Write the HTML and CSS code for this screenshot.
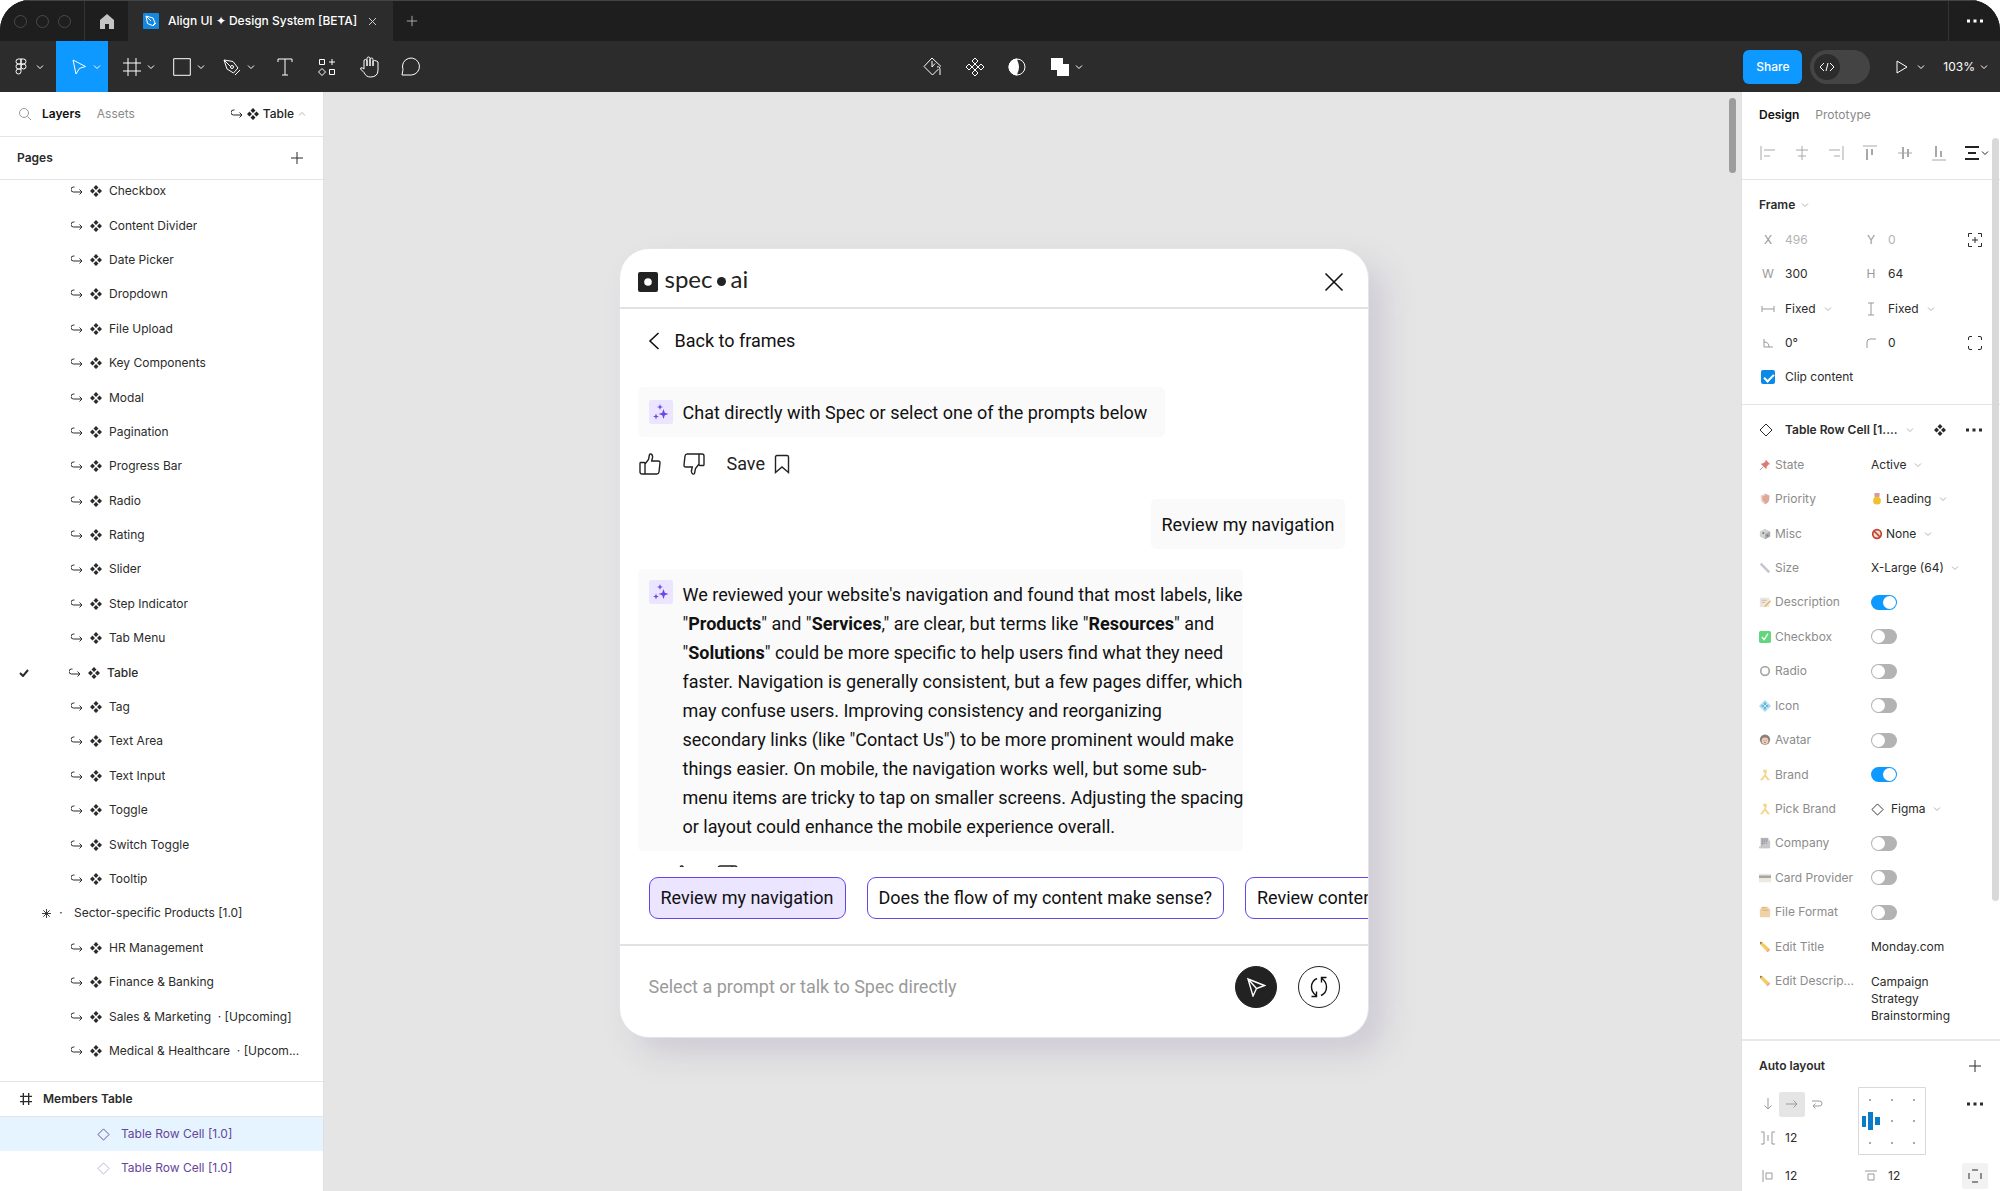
FILE: index.html
```
<!DOCTYPE html>
<html lang="en">
<head>
  <meta charset="UTF-8">
  <title>Align UI Design System</title>
  <link rel="stylesheet" href="styles.css">
</head>
<body>
  <!-- icon sprite -->
  <svg class="sprite" aria-hidden="true">
    <symbol id="chevron" viewBox="0 0 8 8"><path d="M1 2.5l3 3 3-3"/></symbol>
    <symbol id="chevron-up" viewBox="0 0 8 8"><path d="M1 5.5l3-3 3 3"/></symbol>
    <symbol id="plus" viewBox="0 0 14 14"><path d="M7 1v12M1 7h12"/></symbol>
    <symbol id="more" viewBox="0 0 18 6"><path d="M1 1.500h3v3H1zM7.500 1.500h3v3h-3zM14 1.500h3v3h-3z" fill="currentColor" stroke="none"/></symbol>
    <symbol id="arrow" viewBox="0 0 12 10"><path d="M3.500 1H2.500a1.500 1.500 0 0 0 0 5H11M8.500 3.500L11 6 8.500 8.500"/></symbol>
    <symbol id="comp" viewBox="0 0 12 12"><path d="M6 0l2.500 2.500L6 5 3.500 2.500zM6 7l2.500 2.500L6 12 3.500 9.500zM2.500 3.500L5 6 2.500 8.500 0 6zM9.500 3.500L12 6 9.500 8.500 7 6z" fill="currentColor" stroke="none"/></symbol>
    <symbol id="diamond" viewBox="0 0 14 14"><path d="M7 1l6 6-6 6-6-6z"/></symbol>
    <symbol id="frame" viewBox="0 0 18 18"><path d="M5 0v18M13 0v18M0 5h18M0 13h18"/></symbol>
    <symbol id="sparkle" viewBox="0 0 24 24"><path d="M14.500 9l1.300 3.700L19.500 14l-3.700 1.300-1.300 3.700-1.300-3.700L9.500 14l3.700-1.300zM11 4l.8 2.200L14 7l-2.200.8L11 10l-.8-2.200L8 7l2.200-.8zM7 13.500l.8 2.200 2.200.8-2.200.8L7 19.500l-.8-2.200-2.200-.8 2.200-.8z" fill="currentColor" stroke="none"/></symbol>
    <symbol id="thumb-up" viewBox="0 0 22 22"><path d="M1.500 9.500h3.500a1 1 0 0 1 1 1V21H3a2 2 0 0 1-2-2v-8.500q0-1 .5-1zM6 11l3.500-4.500 1-5Q11 .6 12 1q2 1 1.500 3.500L12.700 8h6.500q2 0 1.800 2l-1 9q-.3 2-2.300 2H6"/></symbol>
    <symbol id="thumb-down" viewBox="0 0 22 22"><path d="M20.500 12.500H17a1 1 0 0 1-1-1V1h3a2 2 0 0 1 2 2v8.500q0 1-.5 1zM16 11l-3.500 4.500-1 5q-.5.900-1.500.5-2-1-1.500-3.500L9.300 14H2.800Q.8 14 1 12l1-9q.3-2 2.300-2H16"/></symbol>
    <symbol id="pencil" viewBox="0 0 14 14"><path d="M1 1l3 .5L13 10l-3 3L1.500 4z" fill="#f3cd62"/><path d="M13 10l-3 3-1-1 3-3z" fill="#e8a0a0"/><path d="M1 1l3 .5L1.500 4z" fill="#8d7a60"/></symbol>
    <symbol id="ribbon" viewBox="0 0 14 14"><path d="M5 1h4v3L8 7l5 6h-3L7 9l-3 4H1l5-6 1-2.500L5 4z" fill="#f3d583"/></symbol>
    <symbol id="ic-pin" viewBox="0 0 14 14"><path d="M8 1l5 5-2 .5L9 9l-.5 3L2 5.500 5 5l2.500-2z" fill="#dd7a72"/><path d="M5 9l-4 4" stroke="#999"/></symbol>
    <symbol id="ic-shield" viewBox="0 0 14 14"><path d="M7 1l5 2v4q0 4-5 6-5-2-5-6V3z" fill="#e8d6cc"/><path d="M7 1v12q5-2 5-6V3z" fill="#dfa999"/><path d="M7 3v8q-3-1.500-3-4V4z" fill="#e2a48f"/></symbol>
    <symbol id="ic-box" viewBox="0 0 14 14"><path d="M7 1l6 3v6l-6 3-6-3V4z" fill="#d2d2d2"/><path d="M7 7v6l6-3V4z" fill="#aaa"/><path d="M4 5h2v2H4zM9 8h2v2H9z" fill="#777"/></symbol>
    <symbol id="ic-ruler" viewBox="0 0 14 14"><path d="M3 1l10 10-2 2L1 3z" fill="#c3c5d1"/></symbol>
    <symbol id="ic-memo" viewBox="0 0 14 14"><path d="M1 2h11v11H1z" fill="#eee6dc"/><path d="M3 5h6M3 7.500h4" stroke="#bbb"/><path d="M13 5l-6 6-1 2 2-1 6-6z" fill="#eda951"/></symbol>
    <symbol id="ic-check" viewBox="0 0 14 14"><rect width="14" height="14" rx="2" fill="#62d67c"/><path d="M3.500 7L6 10l4.500-7" stroke="#fff" stroke-width="1.500" fill="none"/></symbol>
    <symbol id="ic-radio" viewBox="0 0 14 14"><circle cx="7" cy="7" r="5" fill="none" stroke="#a8a8a8" stroke-width="2"/></symbol>
    <symbol id="ic-gem" viewBox="0 0 14 14"><path d="M7 0l7 7-7 7-7-7z" fill="#a9d8ef"/><path d="M7 3l4 4-4 4-4-4z" fill="#5fb0d8"/><path d="M3 3l8 8M11 3l-8 8" stroke="#e3f5fd"/></symbol>
    <symbol id="ic-face" viewBox="0 0 14 14"><circle cx="7" cy="6.500" r="6" fill="#8b7f7c"/><circle cx="7" cy="8" r="4" fill="#f1cdb6"/><path d="M5.500 7.500h.8M8 7.500h.8M6 10h2" stroke="#8a6a5a"/></symbol>
    <symbol id="ic-office" viewBox="0 0 14 14"><path d="M2 1h9v12H2z" fill="#b4b4b8"/><path d="M11 4h2v9H0v-2h2" fill="#c8c8ca"/><path d="M4 3v6M6.500 3v6M9 3v6" stroke="#8f9096" stroke-dasharray="1 1"/></symbol>
    <symbol id="ic-card" viewBox="0 0 14 14"><path d="M0 2h14v10H0z" fill="#eee9dd"/><path d="M0 4h14v3H0z" fill="#a5a5a5"/></symbol>
    <symbol id="ic-folder" viewBox="0 0 14 14"><path d="M1 4l3-3h6l3 3v9H1z" fill="#eed2a6"/><path d="M3 2h5M4 5h7" stroke="#d0a97a"/></symbol>
  </svg>

  <header>
    <div class="tabbar">
      <div class="lights"><i></i><i></i><i></i></div>
      <button class="home" aria-label="Home"><svg width="14" height="15" viewBox="0 0 14 15"><path d="M7 0l7 6v9H9v-5H5v5H0V6z" fill="#c4c4c4"/></svg></button>
      <div class="file-tab">
        <svg width="16" height="16" viewBox="0 0 16 16"><rect width="16" height="16" rx="1" fill="#1487e0"/><path d="M3 3l7 2 2 5-2.500 2.500-5-2zM3 3l5 5M10 13l3-3" fill="none" stroke="#fff"/></svg>
        <span>Align UI ✦ Design System [BETA]</span>
        <button aria-label="Close tab"><svg width="9" height="9" viewBox="0 0 9 9"><path d="M1 1l7 7M8 1L1 8"/></svg></button>
      </div>
      <button class="new-tab" aria-label="New tab"><svg width="12" height="12"><use href="#plus"/></svg></button>
      <button class="window-menu" aria-label="Window menu"><svg width="18" height="6"><use href="#more"/></svg></button>
    </div>

    <div class="toolbar">
      <div class="tools">
        <button class="main-menu" aria-label="Main menu">
          <svg width="12" height="18" viewBox="0 0 12 18"><path d="M6 1H3.500a2.500 2.500 0 0 0 0 5H6zM6 1h2.500a2.500 2.500 0 0 1 0 5H6zM6 6H3.500a2.500 2.500 0 0 0 0 5H6zM8.500 6a2.500 2.500 0 1 1 0 5 2.500 2.500 0 0 1 0-5zM6 11H3.500A2.500 2.500 0 1 0 6 13.500z"/></svg>
          <svg width="8" height="8"><use href="#chevron"/></svg>
        </button>
        <button class="menu-tool active" aria-label="Move">
          <svg width="16" height="18" viewBox="0 0 16 18"><path d="M2 2l12.500 6.500-6 1.800L5 16z"/></svg>
          <svg width="8" height="8"><use href="#chevron"/></svg>
        </button>
        <button class="menu-tool" aria-label="Frame">
          <svg width="18" height="18"><use href="#frame"/></svg>
          <svg width="8" height="8"><use href="#chevron"/></svg>
        </button>
        <button class="menu-tool" aria-label="Rectangle">
          <svg width="18" height="18" viewBox="0 0 18 18"><path d="M.7.7h16.600v16.600H.7z"/></svg>
          <svg width="8" height="8"><use href="#chevron"/></svg>
        </button>
        <button class="menu-tool" aria-label="Pen">
          <svg width="18" height="18" viewBox="0 0 18 18"><path d="M1 2l9 1.500 5 6.500-4.500 5L4 11zM1 2l7 7M12 17l5-5"/><circle cx="9" cy="9" r="1.500"/></svg>
          <svg width="8" height="8"><use href="#chevron"/></svg>
        </button>
        <button class="tool" aria-label="Text"><svg width="16" height="18" viewBox="0 0 16 18"><path d="M1 4V1h14v3M8 1v16M5 17h6"/></svg></button>
        <button class="tool" aria-label="Resources"><svg width="18" height="18" viewBox="0 0 18 18"><path d="M1.500 1.500h5v5h-5zM14 1v6M11 4h6M4 10.500l3.500 3.500L4 17.500.5 14zM11.500 11.500h5v5h-5z"/></svg></button>
        <button class="tool" aria-label="Hand"><svg width="20" height="22" viewBox="0 0 20 22"><path d="M5 13V5q0-1.500 1.300-1.500T8 5v5V2.500Q8 1 9.500 1T11 2.500V10 3.500Q11 2 12.500 2T14 3.500V10 6q0-1.500 1.500-1.500T19 6v8q0 7-7.500 7-4.500 0-6.500-4.500L1.500 13q0-2 2-1z"/></svg></button>
        <button class="tool" aria-label="Comment"><svg width="20" height="20" viewBox="0 0 20 20"><path d="M1 18l1-5.500A8.500 8.500 0 1 1 10.500 18z"/></svg></button>
      </div>

      <div class="tools">
        <button class="tool" aria-label="Fill"><svg width="20" height="20" viewBox="0 0 20 20"><path d="M9 1l9 8.500M9 1L1 9.500 9.500 18l6-6M9 4v6l3-3.500M14 10q3-1 3 2.500V18"/></svg></button>
        <button class="tool" aria-label="Create component"><svg width="20" height="20" viewBox="0 0 20 20"><path d="M10 1l3 3-3 3-3-3zM10 13l3 3-3 3-3-3zM4 7l3 3-3 3-3-3zM16 7l3 3-3 3-3-3zM10 7l3 3-3 3-3-3z"/></svg></button>
        <button class="tool" aria-label="Mask"><svg width="18" height="18" viewBox="0 0 18 18"><circle cx="9" cy="9" r="8"/><path d="M9 1a8 8 0 0 0 0 16Q6.500 9 9 1z" fill="#fff"/><path d="M8 1q5 8 0 16z" fill="#fff"/></svg></button>
        <button class="menu-tool union" aria-label="Union">
          <svg width="18" height="18" viewBox="0 0 18 18"><path d="M0 0h12v6h6v12H6v-6H0z" fill="#fff" stroke="none"/></svg>
          <svg width="8" height="8"><use href="#chevron"/></svg>
        </button>
      </div>

      <div class="tools tools-right">
        <button class="share">Share</button>
        <label class="dev-mode"><input type="checkbox" aria-label="Dev mode"><span><svg width="16" height="12" viewBox="0 0 16 12"><path d="M5 2L1 6l4 4M11 2l4 4-4 4M9 2L7 10"/></svg></span></label>
        <button class="present" aria-label="Present">
          <svg width="12" height="14" viewBox="0 0 12 14"><path d="M1 1l10 6-10 6z"/></svg>
          <svg width="8" height="8"><use href="#chevron"/></svg>
        </button>
        <button class="zoom-level">103% <svg width="8" height="8"><use href="#chevron"/></svg></button>
      </div>
    </div>
  </header>

  <main>
    <aside class="left-panel">
      <div class="panel-tabs">
        <svg class="search" width="14" height="14" viewBox="0 0 14 14"><circle cx="6" cy="6" r="4.500"/><path d="M9.500 9.500L13 13"/></svg>
        <button class="current">Layers</button>
        <button>Assets</button>
        <button class="page-switch"><svg width="12" height="10"><use href="#arrow"/></svg><svg width="12" height="12"><use href="#comp"/></svg>Table<svg class="faint" width="8" height="8"><use href="#chevron-up"/></svg></button>
      </div>
      <div class="pages-head">
        <h2>Pages</h2>
        <button aria-label="Add page"><svg width="14" height="14"><use href="#plus"/></svg></button>
      </div>
      <div class="pages">
        <ul>
          <li><svg class="arrow"><use href="#arrow"/></svg><svg class="comp"><use href="#comp"/></svg><span>Checkbox</span></li>
          <li><svg class="arrow"><use href="#arrow"/></svg><svg class="comp"><use href="#comp"/></svg><span>Content Divider</span></li>
          <li><svg class="arrow"><use href="#arrow"/></svg><svg class="comp"><use href="#comp"/></svg><span>Date Picker</span></li>
          <li><svg class="arrow"><use href="#arrow"/></svg><svg class="comp"><use href="#comp"/></svg><span>Dropdown</span></li>
          <li><svg class="arrow"><use href="#arrow"/></svg><svg class="comp"><use href="#comp"/></svg><span>File Upload</span></li>
          <li><svg class="arrow"><use href="#arrow"/></svg><svg class="comp"><use href="#comp"/></svg><span>Key Components</span></li>
          <li><svg class="arrow"><use href="#arrow"/></svg><svg class="comp"><use href="#comp"/></svg><span>Modal</span></li>
          <li><svg class="arrow"><use href="#arrow"/></svg><svg class="comp"><use href="#comp"/></svg><span>Pagination</span></li>
          <li><svg class="arrow"><use href="#arrow"/></svg><svg class="comp"><use href="#comp"/></svg><span>Progress Bar</span></li>
          <li><svg class="arrow"><use href="#arrow"/></svg><svg class="comp"><use href="#comp"/></svg><span>Radio</span></li>
          <li><svg class="arrow"><use href="#arrow"/></svg><svg class="comp"><use href="#comp"/></svg><span>Rating</span></li>
          <li><svg class="arrow"><use href="#arrow"/></svg><svg class="comp"><use href="#comp"/></svg><span>Slider</span></li>
          <li><svg class="arrow"><use href="#arrow"/></svg><svg class="comp"><use href="#comp"/></svg><span>Step Indicator</span></li>
          <li><svg class="arrow"><use href="#arrow"/></svg><svg class="comp"><use href="#comp"/></svg><span>Tab Menu</span></li>
          <li class="selected"><svg class="tick" viewBox="0 0 10 8"><path d="M1 4l3 3 5-6"/></svg><svg class="arrow"><use href="#arrow"/></svg><svg class="comp"><use href="#comp"/></svg><span>Table</span></li>
          <li><svg class="arrow"><use href="#arrow"/></svg><svg class="comp"><use href="#comp"/></svg><span>Tag</span></li>
          <li><svg class="arrow"><use href="#arrow"/></svg><svg class="comp"><use href="#comp"/></svg><span>Text Area</span></li>
          <li><svg class="arrow"><use href="#arrow"/></svg><svg class="comp"><use href="#comp"/></svg><span>Text Input</span></li>
          <li><svg class="arrow"><use href="#arrow"/></svg><svg class="comp"><use href="#comp"/></svg><span>Toggle</span></li>
          <li><svg class="arrow"><use href="#arrow"/></svg><svg class="comp"><use href="#comp"/></svg><span>Switch Toggle</span></li>
          <li><svg class="arrow"><use href="#arrow"/></svg><svg class="comp"><use href="#comp"/></svg><span>Tooltip</span></li>
          <li class="group"><svg class="star" viewBox="0 0 10 10"><path d="M5 0v10M0 5h10M1.500 1.500l7 7M8.500 1.500l-7 7"/></svg><i>·</i><span>Sector-specific Products [1.0]</span></li>
          <li><svg class="arrow"><use href="#arrow"/></svg><svg class="comp"><use href="#comp"/></svg><span>HR Management</span></li>
          <li><svg class="arrow"><use href="#arrow"/></svg><svg class="comp"><use href="#comp"/></svg><span>Finance &amp; Banking</span></li>
          <li><svg class="arrow"><use href="#arrow"/></svg><svg class="comp"><use href="#comp"/></svg><span>Sales &amp; Marketing &nbsp;· [Upcoming]</span></li>
          <li><svg class="arrow"><use href="#arrow"/></svg><svg class="comp"><use href="#comp"/></svg><span>Medical &amp; Healthcare &nbsp;· [Upcom...</span></li>
        </ul>
      </div>
      <div class="layers">
        <h2><svg width="12" height="12"><use href="#frame"/></svg>Members Table</h2>
        <button class="layer on"><svg width="13" height="13"><use href="#diamond"/></svg>Table Row Cell [1.0]</button>
        <button class="layer"><svg width="13" height="13"><use href="#diamond"/></svg>Table Row Cell [1.0]</button>
      </div>
    </aside>

    <section class="canvas">
      <div class="canvas-scroll"></div>
      <div class="dialog">
        <div class="dialog-head">
          <svg width="20" height="20" viewBox="0 0 20 20"><rect width="20" height="20" rx="2" fill="#222" stroke="none"/><circle cx="10" cy="10" r="3.800" fill="#fff" stroke="none"/></svg>
          <div class="brand">spec<i></i>ai</div>
          <button class="close" aria-label="Close"><svg width="20" height="20" viewBox="0 0 20 20"><path d="M1.500 1.500l17 17M18.500 1.500l-17 17"/></svg></button>
        </div>

        <button class="back"><svg width="12" height="20" viewBox="0 0 12 20"><path d="M10.500 2L2 10l8.500 8"/></svg>Back to frames</button>

        <div class="chat">
          <div class="message short">
            <svg class="badge"><use href="#sparkle"/></svg>
            <p>Chat directly with Spec or select one of the prompts below</p>
          </div>
          <div class="actions">
            <button aria-label="Like"><svg width="22" height="22"><use href="#thumb-up"/></svg></button>
            <button aria-label="Dislike"><svg width="22" height="22"><use href="#thumb-down"/></svg></button>
            <button class="save">Save <svg width="16" height="20" viewBox="0 0 16 20"><path d="M1.500 18.500V3q0-1.500 1.500-1.500h10q1.500 0 1.500 1.500v15.500L8 13z"/></svg></button>
          </div>
          <div class="message mine"><p>Review my navigation</p></div>
          <div class="message long">
            <svg class="badge"><use href="#sparkle"/></svg>
            <p>We reviewed your website's navigation and found that most labels, like<br>
            "<b>Products</b>" and "<b>Services</b>," are clear, but terms like "<b>Resources</b>" and<br>
            "<b>Solutions</b>" could be more specific to help users find what they need<br>
            faster. Navigation is generally consistent, but a few pages differ, which<br>
            may confuse users. Improving consistency and reorganizing<br>
            secondary links (like "Contact Us") to be more prominent would make<br>
            things easier. On mobile, the navigation works well, but some sub-<br>
            menu items are tricky to tap on smaller screens. Adjusting the spacing<br>
            or layout could enhance the mobile experience overall.</p>
          </div>
          <div class="actions reply">
            <button aria-label="Like"><svg width="22" height="22"><use href="#thumb-up"/></svg></button>
            <button aria-label="Dislike"><svg width="22" height="22"><use href="#thumb-down"/></svg></button>
          </div>
        </div>

        <div class="chips">
          <button class="chip picked">Review my navigation</button>
          <button class="chip">Does the flow of my content make sense?</button>
          <button class="chip">Review content</button>
        </div>

        <form class="composer">
          <input type="text" placeholder="Select a prompt or talk to Spec directly" aria-label="Prompt">
          <button type="button" class="round dark" aria-label="Send"><svg width="20" height="20" viewBox="0 0 20 20"><path d="M2 2l16.500 6.500-8 3L7 19zM2 2l8.500 9.500"/></svg></button>
          <button type="button" class="round" aria-label="Regenerate"><svg width="20" height="22" viewBox="0 0 20 22"><path d="M8 2.500Q2.500 5 2.500 11q0 5 4.500 8.500M2.500 20.500H7.500V15.500M12 19.500q5.500-2.500 5.500-8.500 0-5-4.500-8.500M17.500 1.500H12.500V6.500"/></svg></button>
        </form>
      </div>
    </section>

    <aside class="right-panel">
      <div class="panel-scroll"></div>
      <div class="panel-tabs">
        <button class="current">Design</button>
        <button>Prototype</button>
      </div>
      <div class="align">
        <button aria-label="Align left"><svg viewBox="0 0 16 16"><path d="M1 1v14M4 5h11M4 11h6"/></svg></button>
        <button aria-label="Align horizontal centers"><svg viewBox="0 0 16 16"><path d="M8 1v14M2 5h12M4 11h8"/></svg></button>
        <button aria-label="Align right"><svg viewBox="0 0 16 16"><path d="M15 1v14M1 5h11M6 11h6"/></svg></button>
        <button aria-label="Align top"><svg viewBox="0 0 16 16"><path d="M1 1h14"/><path d="M5 4v11M10 4v6" stroke-width="2"/></svg></button>
        <button aria-label="Align vertical centers"><svg viewBox="0 0 16 16"><path d="M1 8h14"/><path d="M6 2v12M11 4v8" stroke-width="2"/></svg></button>
        <button aria-label="Align bottom"><svg viewBox="0 0 16 16"><path d="M1 15h14"/><path d="M5 1v11M10 6v6" stroke-width="2"/></svg></button>
        <button class="tidy" aria-label="Tidy up"><svg viewBox="0 0 16 16"><path d="M1 2h14M4 8h8M1 14h14"/></svg><svg class="mini"><use href="#chevron"/></svg></button>
      </div>

      <div class="frame-box">
        <h2>Frame <svg class="faint" width="8" height="8"><use href="#chevron"/></svg></h2>
        <div class="row">
          <label class="dim"><span>X</span><input value="496"></label>
          <label class="dim"><span>Y</span><input value="0"></label>
          <button aria-label="Absolute position"><svg width="16" height="16" viewBox="0 0 16 16"><path d="M1.500 5V1.500H5M11 1.500h3.500V5M14.500 11v3.500H11M5 14.500H1.500V11M8 5v6M5 8h6"/></svg></button>
        </div>
        <div class="row">
          <label><span>W</span><input value="300"></label>
          <label><span>H</span><input value="64"></label>
        </div>
        <div class="row">
          <label><span><svg width="14" height="8" viewBox="0 0 14 8"><path d="M1 1v6M13 1v6M1 4h12"/></svg></span><select aria-label="Width mode"><option>Fixed</option></select><svg class="faint" width="8" height="8"><use href="#chevron"/></svg></label>
          <label><span><svg width="8" height="14" viewBox="0 0 8 14"><path d="M1 1h6M1 13h6M4 1v12"/></svg></span><select aria-label="Height mode"><option>Fixed</option></select><svg class="faint" width="8" height="8"><use href="#chevron"/></svg></label>
        </div>
        <div class="row">
          <label><span><svg width="10" height="10" viewBox="0 0 10 10"><path d="M1 1v8h9M1 4q5 0 5 5"/></svg></span><input value="0°" aria-label="Rotation"></label>
          <label><span><svg width="10" height="10" viewBox="0 0 10 10"><path d="M1 10V4q0-3 3-3h6"/></svg></span><input value="0" aria-label="Corner radius"></label>
          <button aria-label="Independent corners"><svg width="16" height="16" viewBox="0 0 16 16"><path d="M1.500 5V3q0-1.500 1.500-1.500h2M11 1.500h2q1.500 0 1.500 1.500v2M14.500 11v2q0 1.500-1.500 1.500h-2M5 14.500H3q-1.500 0-1.500-1.500v-2"/></svg></button>
        </div>
        <label class="clip"><input type="checkbox" checked>Clip content</label>
      </div>

      <div class="props">
        <div class="prop-head">
          <svg width="14" height="14"><use href="#diamond"/></svg>
          <h2>Table Row Cell [1....</h2>
          <svg class="faint" width="8" height="8"><use href="#chevron"/></svg>
          <svg width="12" height="12"><use href="#comp"/></svg>
          <button aria-label="More"><svg width="18" height="6"><use href="#more"/></svg></button>
        </div>
        <div class="prop"><label for="state"><svg><use href="#ic-pin"/></svg>State</label><div><select id="state"><option>Active</option></select><svg class="faint" width="8" height="8"><use href="#chevron"/></svg></div></div>
        <div class="prop"><label for="priority"><svg><use href="#ic-shield"/></svg>Priority</label><div><svg class="emoji" viewBox="0 0 14 14"><path d="M4 0h6v4l-3 2-3-2z" fill="#d99aa0"/><circle cx="7" cy="9" r="4.500" fill="#edc22e"/></svg><select id="priority"><option>Leading</option></select><svg class="faint" width="8" height="8"><use href="#chevron"/></svg></div></div>
        <div class="prop"><label for="misc"><svg><use href="#ic-box"/></svg>Misc</label><div><svg class="emoji" viewBox="0 0 14 14"><circle cx="7" cy="7" r="5" fill="#f3ded9" stroke="#c4412c" stroke-width="2"/><path d="M3.500 3.500l7 7" stroke="#c4412c" stroke-width="2"/></svg><select id="misc"><option>None</option></select><svg class="faint" width="8" height="8"><use href="#chevron"/></svg></div></div>
        <div class="prop"><label for="size"><svg><use href="#ic-ruler"/></svg>Size</label><div><select id="size"><option>X-Large (64)</option></select><svg class="faint" width="8" height="8"><use href="#chevron"/></svg></div></div>
        <div class="prop"><label for="description"><svg><use href="#ic-memo"/></svg>Description</label><div><input class="switch" type="checkbox" id="description" checked></div></div>
        <div class="prop"><label for="checkbox"><svg><use href="#ic-check"/></svg>Checkbox</label><div><input class="switch" type="checkbox" id="checkbox"></div></div>
        <div class="prop"><label for="radio"><svg><use href="#ic-radio"/></svg>Radio</label><div><input class="switch" type="checkbox" id="radio"></div></div>
        <div class="prop"><label for="icon"><svg><use href="#ic-gem"/></svg>Icon</label><div><input class="switch" type="checkbox" id="icon"></div></div>
        <div class="prop"><label for="avatar"><svg><use href="#ic-face"/></svg>Avatar</label><div><input class="switch" type="checkbox" id="avatar"></div></div>
        <div class="prop"><label for="brand"><svg><use href="#ribbon"/></svg>Brand</label><div><input class="switch" type="checkbox" id="brand" checked></div></div>
        <div class="prop"><label for="pick"><svg><use href="#ribbon"/></svg>Pick Brand</label><div class="swap"><svg width="13" height="13"><use href="#diamond"/></svg><select id="pick"><option>Figma</option></select><svg class="faint" width="8" height="8"><use href="#chevron"/></svg></div></div>
        <div class="prop"><label for="company"><svg><use href="#ic-office"/></svg>Company</label><div><input class="switch" type="checkbox" id="company"></div></div>
        <div class="prop"><label for="card"><svg><use href="#ic-card"/></svg>Card Provider</label><div><input class="switch" type="checkbox" id="card"></div></div>
        <div class="prop"><label for="format"><svg><use href="#ic-folder"/></svg>File Format</label><div><input class="switch" type="checkbox" id="format"></div></div>
        <div class="prop"><label for="title"><svg><use href="#pencil"/></svg>Edit Title</label><div><input id="title" value="Monday.com"></div></div>
        <div class="prop tall"><label for="text"><svg><use href="#pencil"/></svg>Edit Descrip...</label><div><textarea id="text" rows="3">Campaign
Strategy
Brainstorming</textarea></div></div>
      </div>

      <div class="auto-layout">
        <div class="auto-head">
          <h2>Auto layout</h2>
          <button aria-label="Add auto layout"><svg width="14" height="14"><use href="#plus"/></svg></button>
        </div>
        <div class="auto-body">
          <div>
            <div class="directions">
              <button aria-label="Vertical"><svg width="10" height="12" viewBox="0 0 10 12"><path d="M5 0v11M1.500 7.500L5 11l3.500-3.500"/></svg></button>
              <button class="on" aria-label="Horizontal"><svg width="12" height="10" viewBox="0 0 12 10"><path d="M0 5h11M7.500 1.500L11 5 7.500 8.500"/></svg></button>
              <button aria-label="Wrap"><svg width="12" height="12" viewBox="0 0 12 12"><path d="M1 3h7.500a2.500 2.500 0 0 1 0 5H2M4.500 5.500L2 8l2.500 2.500"/></svg></button>
            </div>
            <label class="field"><span><svg width="16" height="14" viewBox="0 0 16 14"><path d="M1 1h3v12H1M15 1h-3v12h3M8 4v6"/></svg></span><input value="12" aria-label="Gap"></label>
          </div>
          <svg class="align-box" viewBox="0 0 68 68"><path d="M.5.5h67v67H.5z" fill="#fff" stroke="#d9d9d9"/><path d="M11 12h2v2h-2zM33 12h2v2h-2zM55 12h2v2h-2zM33 33h2v2h-2zM55 33h2v2h-2zM11 55h2v2h-2zM33 55h2v2h-2zM55 55h2v2h-2z" fill="#aaa"/><path d="M4 29h4v11H4zM10 25h5v18h-5zM17 30h5v8h-5z" fill="#0b7bc9"/></svg>
          <button aria-label="Advanced layout"><svg width="18" height="6"><use href="#more"/></svg></button>
        </div>
        <div class="row">
          <label><span><svg width="12" height="12" viewBox="0 0 12 12"><path d="M1 0v12M4 3h6v6H4z"/></svg></span><input value="12" aria-label="Horizontal padding"></label>
          <label><span><svg width="12" height="12" viewBox="0 0 12 12"><path d="M0 1h12M3 4h6v6H3z"/></svg></span><input value="12" aria-label="Vertical padding"></label>
          <button class="sides" aria-label="Individual padding"><svg width="14" height="14" viewBox="0 0 14 14"><path d="M1 4v6M13 4v6M4 1h6M4 13h6"/></svg></button>
        </div>
      </div>
    </aside>
  </main>
</body>
</html>
```
FILE: styles.css
```
* {
  box-sizing: border-box;
}

body {
  margin: 0;
  height: 100vh;
  display: flex;
  flex-direction: column;
  background: #fff;
  color: #2b2b2b;
  font: 12px/16px Inter, sans-serif;
  overflow: hidden;
}

button, input, select, textarea {
  font: inherit;
  color: inherit;
  background: none;
  border: none;
  padding: 0;
  margin: 0;
  appearance: none;
}

button {
  display: flex;
  align-items: center;
  justify-content: center;
  cursor: pointer;
}

svg {
  flex: none;
  display: block;
  fill: none;
  stroke: currentColor;
}

h2 {
  margin: 0;
  font-size: 12px;
  font-weight: 600;
}

.sprite {
  display: none;
}

.faint {
  color: #b3b3b3;
}

/* header */
header {
  flex: none;
  background: #2c2c2c;
  color: #fff;
  border-radius: 30px 30px 0 0;
  overflow: hidden;
}

.tabbar {
  display: flex;
  height: 41px;
  border-top: 1px solid #444;
  background: #1e1e1e;
}

.lights {
  width: 85px;
  display: flex;
  align-items: center;
  gap: 9px;
  padding-left: 14px;
  border-right: 1px solid #333;
}

.lights i {
  width: 13px;
  height: 13px;
  border: 1px solid #4a4a4a;
  border-radius: 50%;
}

.home {
  width: 43px;
}

.home svg {
  stroke: none;
}

.file-tab {
  display: flex;
  align-items: center;
  gap: 9px;
  padding: 0 16px 0 15px;
  background: #2c2c2c;
  font-weight: 500;
}

.file-tab svg {
  stroke: none;
}

.file-tab button {
  margin-left: 2px;
  color: #ccc;
}

.file-tab button svg {
  stroke: currentColor;
}

.new-tab {
  width: 38px;
  color: #bbb;
}

.window-menu {
  width: 52px;
  margin-left: auto;
  border-left: 1px solid #333;
}

.toolbar {
  display: grid;
  grid-template-columns: 1fr auto 1fr;
  height: 51px;
}

.tools {
  display: flex;
  align-items: stretch;
}

.main-menu {
  width: 56px;
  gap: 9px;
  padding-left: 2px;
}

.menu-tool {
  width: 50px;
  gap: 6px;
}

.menu-tool.active {
  width: 52px;
  margin-right: 6px;
  padding-left: 8px;
  background: #0d99ff;
}

.menu-tool.union {
  padding-left: 8px;
}

.tool {
  width: 42px;
}

.tools-right {
  justify-content: flex-end;
  align-items: center;
  padding-right: 12px;
}

.share {
  width: 59px;
  height: 34px;
  border-radius: 6px;
  background: #0d99ff;
  font-weight: 500;
}

.dev-mode {
  display: flex;
  align-items: center;
  width: 60px;
  height: 34px;
  margin: 0 26px 0 8px;
  padding-left: 4px;
  border-radius: 17px;
  background: #444;
}

.dev-mode input {
  position: absolute;
  opacity: 0;
}

.dev-mode span {
  display: flex;
  align-items: center;
  justify-content: center;
  width: 26px;
  height: 26px;
  border-radius: 50%;
  background: #2c2c2c;
}

.present {
  gap: 9px;
  margin-right: 18px;
}

.zoom-level {
  gap: 5px;
}

/* panels */
main {
  flex: 1;
  min-height: 0;
  display: flex;
}

.left-panel {
  width: 324px;
  flex: none;
  display: flex;
  flex-direction: column;
  border-right: 1px solid #e0e0e0;
}

.panel-tabs {
  display: flex;
  align-items: center;
  gap: 16px;
  height: 45px;
  padding: 0 17px 0 18px;
  color: #8a8a8a;
}

.panel-tabs .current {
  color: #111;
  font-weight: 600;
}

.left-panel .panel-tabs {
  border-bottom: 1px solid #e4e4e4;
}

.search {
  margin-right: -6px;
  color: #999;
}

.page-switch {
  gap: 4px;
  margin-left: auto;
  color: #222;
  font-weight: 500;
}

.pages-head {
  display: flex;
  align-items: center;
  justify-content: space-between;
  height: 43px;
  padding: 0 19px 0 17px;
  border-bottom: 1px solid #e4e4e4;
}

.pages {
  flex: 1;
  min-height: 0;
  display: flex;
  overflow: hidden;
}

.pages ul {
  flex: 1;
  min-width: 0;
  display: flex;
  flex-direction: column;
  margin: -6px 0 13px;
  padding: 0;
  list-style: none;
}

.pages li {
  flex: 1;
  display: flex;
  align-items: center;
  padding: 0 20px 0 71px;
}

.pages span {
  overflow: hidden;
  white-space: nowrap;
  text-overflow: ellipsis;
}

.arrow {
  width: 12px;
  height: 10px;
  margin-right: 7px;
}

.comp {
  width: 12px;
  height: 12px;
  margin-right: 7px;
}

.pages .selected {
  padding-left: 19px;
  font-weight: 500;
}

.tick {
  width: 10px;
  height: 8px;
  margin-right: 40px;
  stroke-width: 2;
}

.pages .group {
  padding-left: 42px;
}

.group i {
  width: 21px;
  padding-left: 8px;
  margin-right: 2px;
}

.star {
  width: 9px;
  height: 9px;
}

.layers h2 {
  display: flex;
  align-items: center;
  gap: 11px;
  height: 36px;
  padding-left: 20px;
  border: solid #e4e4e4;
  border-width: 1px 0;
}

.layers h2 svg {
  stroke-width: 2;
}

.layers {
  padding-bottom: 6px;
}

.layer {
  width: 100%;
  height: 34px;
  gap: 11px;
  padding-left: 97px;
  justify-content: flex-start;
  color: #65459c;
}

.layer svg {
  color: #b9aed0;
}

.layer.on {
  background: #e5f4ff;
}

.layer.on svg {
  color: #65459c;
}

/* canvas */
.canvas {
  flex: 1;
  position: relative;
  display: flex;
  align-items: center;
  justify-content: center;
  padding: 2px 78px 0 0;
  background: #e5e5e5;
}

.canvas-scroll {
  position: absolute;
  top: 6px;
  right: 5px;
  width: 7px;
  height: 75px;
  border-radius: 4px;
  background: #9c9c9c;
}

.dialog {
  width: 750px;
  overflow: hidden;
  border: 1px solid #e4e2ec;
  border-radius: 30px;
  background: #fff;
  color: #111;
  font: 18px/28px Roboto, sans-serif;
  box-shadow: 16px 16px 32px rgba(120, 105, 150, 0.2);
}

.dialog-head {
  display: flex;
  align-items: center;
  height: 60px;
  padding: 8px 24px 0 18px;
  border-bottom: 2px solid #e2e2e4;
}

.brand {
  display: flex;
  align-items: center;
  margin: -6px 0 0 7px;
  color: #222;
  font: 24px/28px Lato, sans-serif;
}

.brand i {
  width: 9px;
  height: 9px;
  margin: 6px 4px 0 5px;
  border-radius: 50%;
  background: #222;
}

.close {
  margin-left: auto;
}

.close svg, .back svg {
  stroke-width: 1.6;
}

.back {
  gap: 15px;
  height: 64px;
  padding-left: 28px;
}

.chat {
  display: flex;
  flex-direction: column;
  align-items: flex-start;
  max-height: 494px;
  padding: 14px 23px 0 18px;
  overflow: hidden;
}

.message {
  flex: none;
  display: flex;
  gap: 10px;
  max-width: 608px;
  padding: 11px 10px 10px 11px;
  border-radius: 5px;
  background: #fafafa;
  line-height: 29px;
}

.message p {
  margin: 0;
}

.message.short {
  align-items: center;
  padding-right: 18px;
}

.message.long {
  padding-right: 0;
  white-space: nowrap;
}

.message.mine {
  align-self: flex-end;
  margin-bottom: 20px;
}

.badge {
  width: 24px;
  height: 24px;
  border-radius: 2px;
  background: #ebe5ff;
  color: #6b47e8;
}

.actions {
  flex: none;
  display: flex;
  align-items: center;
  gap: 22px;
  height: 22px;
  margin: 16px 0 24px 1px;
  color: #222;
}

.actions svg {
  stroke-width: 1.4;
}

.actions.reply {
  gap: 24px;
  margin: 14px 0 0 32px;
}

.save {
  gap: 9px;
}

.chips {
  display: flex;
  gap: 21px;
  padding: 10px 0 25px 29px;
  border-bottom: 2px solid #e2e2e4;
  overflow: hidden;
}

.chip {
  flex: none;
  height: 42px;
  padding: 0 11px;
  border: 1px solid #6a45e6;
  border-radius: 9px;
  white-space: nowrap;
}

.chip.picked {
  background: #ebe5ff;
}

.composer {
  display: flex;
  align-items: center;
  gap: 21px;
  height: 91px;
  padding: 0 28px 8px 29px;
}

.composer input {
  flex: 1;
}

.composer input::placeholder {
  color: #9a9a9a;
}

.round {
  width: 42px;
  height: 42px;
  border: 1px solid #222;
  border-radius: 50%;
}

.round svg {
  stroke-width: 1.4;
}

.round.dark {
  background: #222;
  color: #fff;
}

/* right panel */
.right-panel {
  position: relative;
  width: 259px;
  flex: none;
  display: flex;
  flex-direction: column;
  border-left: 1px solid #e0e0e0;
}

.panel-scroll {
  position: absolute;
  top: 46px;
  right: 1px;
  width: 7px;
  height: 763px;
  border-radius: 4px;
  background: #d9d9d9;
}

.right-panel .panel-tabs {
  padding-left: 17px;
}

.align {
  display: flex;
  align-items: center;
  justify-content: space-between;
  height: 43px;
  padding: 0 11px 11px 18px;
  border-bottom: 1px solid #e4e4e4;
  color: #a8a8a8;
}

.align svg {
  width: 16px;
  height: 16px;
}

.align .tidy {
  width: 24px;
  color: #222;
  gap: 1px;
}

.tidy svg {
  stroke-width: 2;
}

.align .mini {
  width: 8px;
  height: 8px;
  stroke-width: 1;
}

.frame-box {
  padding: 8px 15px 10px 17px;
  border-bottom: 1px solid #e4e4e4;
}

.frame-box h2, .clip {
  display: flex;
  align-items: center;
  gap: 6px;
  height: 34px;
}

.row {
  display: grid;
  grid-template-columns: 103px 1fr 20px;
  align-items: center;
  height: 34px;
}

.frame-box .row:nth-child(even) {
  height: 35px;
}

.row label, .field {
  display: flex;
  align-items: center;
  gap: 8px;
  min-width: 0;
}

.row span, .field span {
  width: 18px;
  flex: none;
  display: flex;
  justify-content: center;
  color: #999;
}

.row input, .field input {
  width: 50px;
}

.row .dim {
  color: #b3b3b3;
}

.clip {
  gap: 10px;
  padding-left: 2px;
}

.clip input {
  width: 14px;
  height: 14px;
  border-radius: 2px;
  background: #0d8ae8;
}

.clip input:checked::after {
  content: "";
  display: block;
  width: 8px;
  height: 4px;
  margin: 4px 3px;
  border: solid #fff;
  border-width: 0 0 2px 2px;
  rotate: -45deg;
}

.props {
  flex: 1;
  min-height: 0;
  display: flex;
  flex-direction: column;
  padding: 8px 17px 0;
  border-bottom: 2px solid #e8e8e8;
}

.prop-head {
  flex: 1;
  display: flex;
  align-items: center;
}

.prop-head h2 {
  margin: 0 8px 0 12px;
}

.prop-head .faint {
  margin-right: auto;
}

.prop-head button {
  margin-left: 19px;
}

.prop {
  flex: 1;
  min-height: 0;
  display: grid;
  grid-template-columns: 112px 1fr;
  align-items: center;
}

.prop label {
  display: flex;
  align-items: center;
  gap: 4px;
  color: #8c8c8c;
  white-space: nowrap;
}

.prop label svg, .emoji {
  width: 12px;
  height: 12px;
  stroke: none;
}

.prop div {
  display: flex;
  align-items: center;
  gap: 7px;
}

.prop .emoji {
  margin-right: -4px;
}

.prop input {
  width: 100px;
}

.prop textarea {
  width: 100%;
  height: 51px;
  line-height: 17px;
  resize: none;
  overflow: hidden;
}

.prop.tall {
  flex: none;
  height: 75px;
  padding-top: 9px;
  align-items: start;
}

.prop .switch {
  width: 26px;
  height: 15px;
  padding: 1px;
  border-radius: 8px;
  background: #b3b3b3;
}

.switch::before {
  content: "";
  display: block;
  width: 13px;
  height: 13px;
  border-radius: 50%;
  background: #fff;
}

.prop .switch:checked {
  background: #0d99ff;
}

.switch:checked::before {
  margin-left: 11px;
}

.auto-layout {
  flex: none;
  padding: 8px 15px 0 17px;
}

.auto-head {
  display: flex;
  align-items: center;
  justify-content: space-between;
  height: 34px;
  padding-right: 3px;
  margin-bottom: 4px;
}

.auto-body {
  display: grid;
  grid-template-columns: 99px 1fr 20px;
  align-items: start;
  height: 74px;
}

.auto-body > button, .directions {
  height: 34px;
}

.directions {
  display: flex;
  align-items: center;
  gap: 3px;
  color: #999;
}

.directions button {
  width: 17px;
  height: 25px;
}

.directions .on {
  width: 26px;
  border-radius: 2px;
  background: #e5e5e5;
}

.field {
  height: 34px;
}

.align-box {
  width: 68px;
  height: 68px;
  stroke: none;
}

.sides {
  width: 26px;
  height: 26px;
  margin-left: -3px;
  border-radius: 2px;
  background: #f2f2f2;
}

.auto-layout .row {
  height: 30px;
}
```
